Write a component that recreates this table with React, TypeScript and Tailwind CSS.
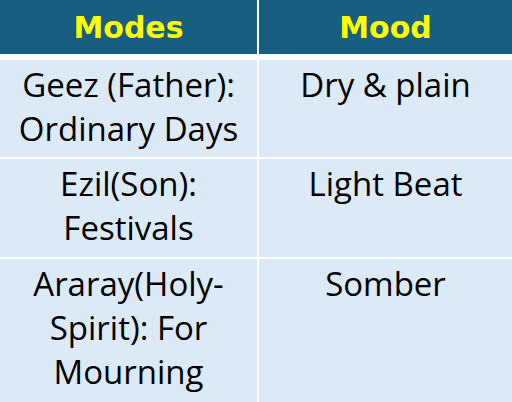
const rows = [
  { mode: ["Geez (Father):", "Ordinary Days"], mood: "Dry & plain", h: "h-[97px]" },
  { mode: ["Ezil(Son):", "Festivals"], mood: "Light Beat", h: "h-[98px]" },
  { mode: ["Araray(Holy-", "Spirit): For", "Mourning"], mood: "Somber", h: "h-[143px]" },
];

export default function App() {
  return (
    <div className="w-[512px] h-[402px] bg-white overflow-hidden">
      <div className="grid grid-cols-[257px_253px] gap-x-[2px]">
        <div className="h-[54px] bg-[#175e80] flex items-center justify-center text-[#ffff00] font-bold text-[30px] font-['DejaVu_Sans',sans-serif]">
          Modes
        </div>
        <div className="h-[54px] bg-[#175e80] flex items-center justify-center text-[#ffff00] font-bold text-[30px] font-['DejaVu_Sans',sans-serif]">
          Mood
        </div>
      </div>
      <div className="mt-[6px] grid grid-cols-[257px_253px] gap-x-[2px] gap-y-[2px] font-['Open_Sans',sans-serif] text-[33px] leading-[44px] text-black">
        {rows.map((r) => (
          <div key={r.mood} className="contents">
            <div className={`${r.h} bg-[#dce9f6] pt-[3px] text-center`}>
              {r.mode.map((l) => (
                <div key={l}>{l}</div>
              ))}
            </div>
            <div className={`${r.h} bg-[#dce9f6] pt-[3px] text-center`}>{r.mood}</div>
          </div>
        ))}
      </div>
    </div>
  );
}
